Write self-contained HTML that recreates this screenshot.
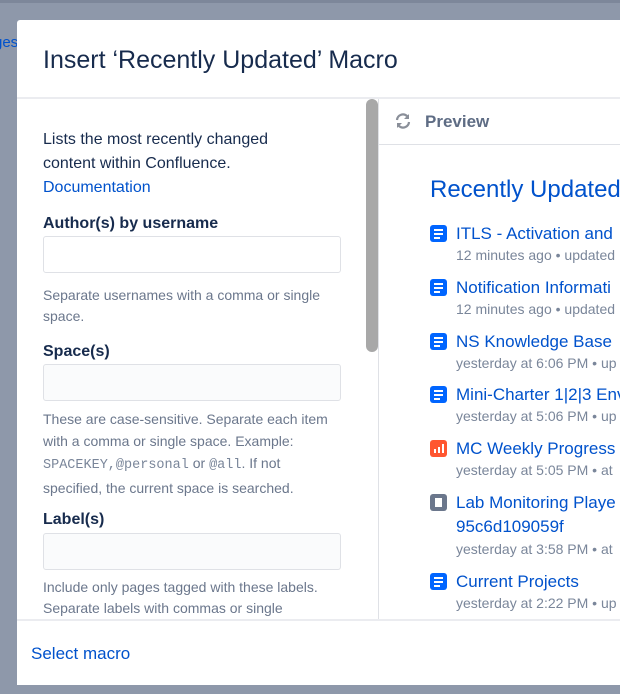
<html><head><style>
body{margin:0;width:620px;height:694px;overflow:hidden;background:#8e98aa;font-family:"Liberation Sans",sans-serif;position:relative}
.a{position:absolute;white-space:nowrap}
.dlg{position:absolute;left:17px;top:20px;width:620px;height:665px;background:#fff;border-radius:3px}
.lbl{font-size:16px;font-weight:bold;color:#172b4d}
.inp{position:absolute;left:43px;width:296px;height:35px;border:1px solid #dfe1e6;border-radius:3px;background:#fafbfc}
.h{font-size:14px;color:#6b778c;line-height:21px;white-space:normal;width:300px}
.t{font-size:17px;color:#0052cc}
.s{font-size:14px;color:#7a869a}
.ic{position:absolute;left:430px;width:17px;height:17px;border-radius:3px;background:#0065ff}
.ic i{position:absolute;left:4px;height:2px;background:#fff}
code{font-family:"Liberation Mono",monospace;font-size:13.5px;color:#7a869a}
</style></head><body>
<div class="a" style="left:0;top:0;width:620px;height:3px;background:#7d879a"></div>
<div class="a" style="left:-6px;top:34px;font-size:15px;color:#0052cc">ges</div>
<div class="dlg"></div>
<div class="a" style="left:43px;top:46px;font-size:25px;color:#172b4d">Insert ‘Recently Updated’ Macro</div>
<div class="a" style="left:17px;top:97px;width:603px;height:2px;background:#ebecf0"></div>
<div class="a" style="left:366px;top:99px;width:12px;height:253px;background:#a8a8a8;border-radius:6px"></div>
<div class="a" style="left:378px;top:99px;width:1px;height:521px;background:#dfe1e6"></div>
<div class="a" style="left:379px;top:144px;width:241px;height:1px;background:#dfe1e6"></div>
<svg class="a" style="left:393px;top:111px" width="20" height="20" viewBox="0 0 20 20"><path d="M4 9a6 6 0 0 1 10-4l1 1M16 11a6 6 0 0 1-10 4l-1-1" fill="none" stroke="#8a8f99" stroke-width="2.2"/><path d="M16 3v5h-5zM4 17v-5h5z" fill="#8a8f99"/></svg>
<div class="a" style="left:425px;top:112px;font-size:17px;font-weight:bold;color:#5e6c84">Preview</div>
<div class="a" style="left:43px;top:128px;font-size:16px;color:#172b4d;line-height:24px">Lists the most recently changed<br>content within Confluence.<br><span style="color:#0052cc">Documentation</span></div>
<div class="a lbl" style="left:43px;top:215px">Author(s) by username</div>
<div class="inp" style="top:236px;background:#fff"></div>
<div class="a h" style="left:43px;top:285px">Separate usernames with a comma or single space.</div>
<div class="a lbl" style="left:43px;top:343px">Space(s)</div>
<div class="inp" style="top:364px"></div>
<div class="a h" style="left:43px;top:408px;line-height:22px;width:290px">These are case-sensitive. Separate each item with a comma or single space. Example: <code>SPACEKEY,@personal</code> or <code>@all</code>. If not specified, the current space is searched.</div>
<div class="a lbl" style="left:43px;top:511px">Label(s)</div>
<div class="inp" style="top:533px"></div>
<div class="a h" style="left:43px;top:577px">Include only pages tagged with these labels. Separate labels with commas or single</div>
<div class="a" style="left:17px;top:619px;width:603px;height:2px;background:#ebecf0"></div>
<div class="a" style="left:17px;top:621px;width:603px;height:64px;background:#fff"></div>
<div class="a" style="left:31px;top:644px;font-size:17px;color:#0052cc">Select macro</div>
<div class="a" style="left:430px;top:176px;font-size:24px;color:#0052cc">Recently Updated</div>
<div class="ic" style="top:225px"><i style="top:4px;width:9px"></i><i style="top:8px;width:9px"></i><i style="top:12px;width:6px"></i></div>
<div class="a t" style="left:456px;top:224px">ITLS - Activation and</div><div class="a s" style="left:456px;top:247px">12 minutes ago • updated</div>
<div class="ic" style="top:279px"><i style="top:4px;width:9px"></i><i style="top:8px;width:9px"></i><i style="top:12px;width:6px"></i></div>
<div class="a t" style="left:456px;top:278px">Notification Informati</div><div class="a s" style="left:456px;top:301px">12 minutes ago • updated</div>
<div class="ic" style="top:333px"><i style="top:4px;width:9px"></i><i style="top:8px;width:9px"></i><i style="top:12px;width:6px"></i></div>
<div class="a t" style="left:456px;top:332px">NS Knowledge Base</div><div class="a s" style="left:456px;top:355px">yesterday at 6:06 PM • up</div>
<div class="ic" style="top:386px"><i style="top:4px;width:9px"></i><i style="top:8px;width:9px"></i><i style="top:12px;width:6px"></i></div>
<div class="a t" style="left:456px;top:385px">Mini-Charter 1|2|3 Env</div><div class="a s" style="left:456px;top:408px">yesterday at 5:06 PM • up</div>
<div class="ic" style="top:440px;background:#ff5630"><i style="left:4px;top:9px;width:2px;height:4px"></i><i style="left:8px;top:7px;width:2px;height:6px"></i><i style="left:12px;top:4px;width:2px;height:9px"></i></div>
<div class="a t" style="left:456px;top:439px">MC Weekly Progress</div><div class="a s" style="left:456px;top:462px">yesterday at 5:05 PM • at</div>
<div class="ic" style="top:494px;background:#6b778c"><i style="left:5px;top:4px;width:7px;height:9px"></i></div>
<div class="a t" style="left:456px;top:493px">Lab Monitoring Playe</div><div class="a t" style="left:456px;top:517px">95c6d109059f</div><div class="a s" style="left:456px;top:541px">yesterday at 3:58 PM • at</div>
<div class="ic" style="top:573px"><i style="top:4px;width:9px"></i><i style="top:8px;width:9px"></i><i style="top:12px;width:6px"></i></div>
<div class="a t" style="left:456px;top:572px">Current Projects</div><div class="a s" style="left:456px;top:595px">yesterday at 2:22 PM • up</div>
</body></html>
